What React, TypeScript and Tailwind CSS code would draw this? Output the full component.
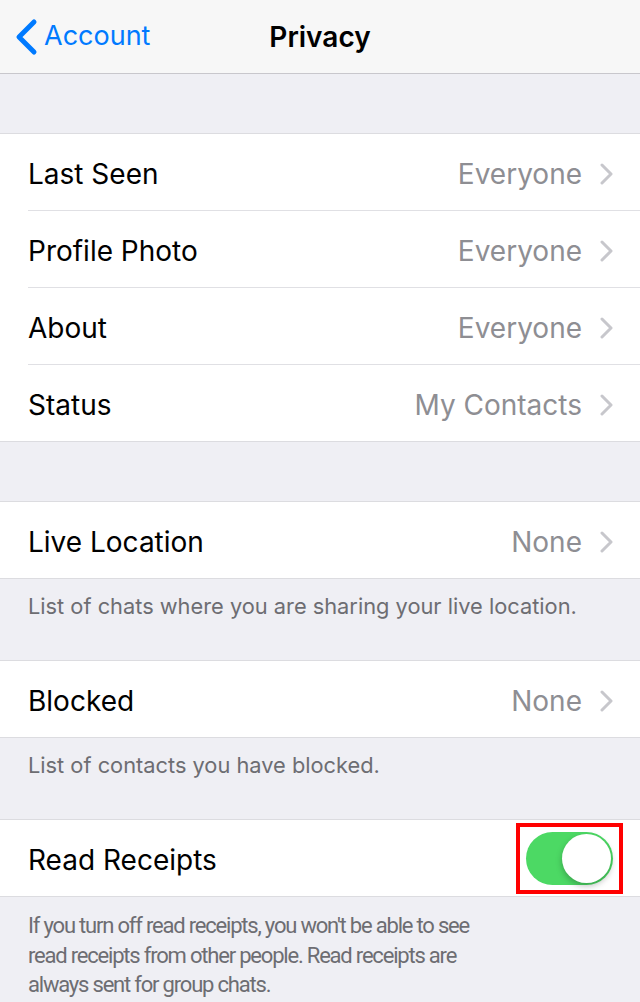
import React from "react";

const font = { fontFamily: "Inter, 'Noto Sans', sans-serif" };

function Chevron() {
	return (
		<svg width="14" height="22" viewBox="0 0 14 22" className="ml-[18px] mr-[26px]">
			<polyline points="2,2 11,11 2,20" fill="none" stroke="#c7c7cc" strokeWidth="3" strokeLinecap="round" strokeLinejoin="round" />
		</svg>
	);
}

function Row({ label, value, last }: { label: string; value?: string; last?: boolean }) {
	return (
		<div className={`flex bg-white pl-7 ${last ? "h-[76px]" : "h-[77px]"}`}>
			<div className={`flex flex-1 items-center pt-[3px] ${last ? "" : "border-b border-[#e0e0e4]"}`}>
				<div className="flex-1 text-[28px] text-black">{label}</div>
				{value && <div className="text-[28px] text-[#8e8e93]">{value}</div>}
				{value && <Chevron />}
			</div>
		</div>
	);
}

function Group({ children }: { children: React.ReactNode }) {
	return <div className="border-y border-[#dcdce0]">{children}</div>;
}

function Footer({ text }: { text: string }) {
	return <div className="h-[81px] px-7 pt-[13px] text-[21.8px] leading-[29.5px] text-[#6d6d72]">{text}</div>;
}

export default function App() {
	return (
		<div className="min-h-[1002px] bg-[#efeff4]" style={font}>
			<div className="relative flex h-[74px] items-center border-b border-[#c8c7cc] bg-[#f7f7f7]">
				<div className="flex items-center pl-[15px] text-[#007aff]">
					<svg width="24" height="38" viewBox="0 0 24 38">
						<polyline points="19,4 4,19 19,34" fill="none" stroke="#007aff" strokeWidth="5" strokeLinecap="round" strokeLinejoin="round" />
					</svg>
					<span className="ml-[5px] text-[27px]">Account</span>
				</div>
				<div className="pointer-events-none absolute inset-x-0 text-center text-[28px] font-semibold text-black">Privacy</div>
			</div>
			<div className="h-[59px]" />
			<Group>
				<Row label="Last Seen" value="Everyone" />
				<Row label="Profile Photo" value="Everyone" />
				<Row label="About" value="Everyone" />
				<Row label="Status" value="My Contacts" last />
			</Group>
			<div className="h-[59px]" />
			<Group>
				<Row label="Live Location" value="None" last />
			</Group>
			<Footer text="List of chats where you are sharing your live location." />
			<Group>
				<Row label="Blocked" value="None" last />
			</Group>
			<Footer text="List of contacts you have blocked." />
			<Group>
				<div className="flex h-[76px] items-center bg-white pl-7">
					<div className="flex-1 pt-[3px] text-[28px] text-black">Read Receipts</div>
					<div className="mr-[17px] border-4 border-[#ff0000] px-[6px] py-[5px]">
						<div className="relative h-[53px] w-[87px] rounded-full bg-[#4cd964]">
							<div className="absolute right-[2px] top-[2px] h-[49px] w-[49px] rounded-full bg-white shadow-[0_3px_6px_rgba(0,0,0,0.25)]" />
						</div>
					</div>
				</div>
			</Group>
			<div
				className="px-7 pt-[14px] pb-4 text-[22px] leading-[29.5px] tracking-[-1.2px] text-[#6d6d72]"
				style={{ fontFamily: "Roboto, 'Noto Sans', sans-serif" }}>
				<span className="block">If you turn off read receipts, you won't be able to see</span>
				<span className="block">read receipts from other people. Read receipts are</span>
				<span className="block">always sent for group chats.</span>
			</div>
		</div>
	);
}
